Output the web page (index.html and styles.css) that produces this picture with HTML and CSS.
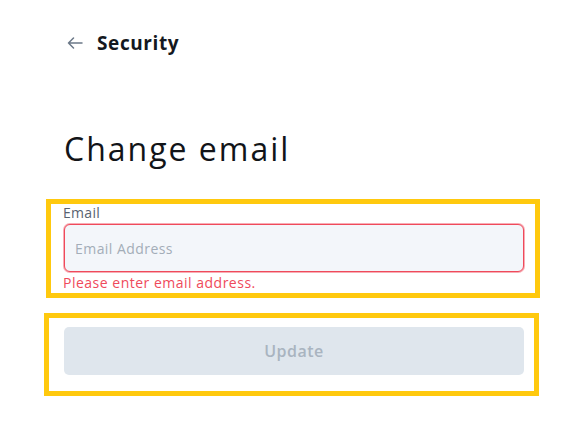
FILE: index.html
```html
<!DOCTYPE html>
<html>
<head>
<meta charset="utf-8">
<link rel="stylesheet" href="styles.css">
</head>
<body>
<div class="page">
  <div class="topbar">
    <svg class="back" width="16" height="12" viewBox="0 0 16 12" fill="none"><path d="M15 6H1.5M6.5 1L1.5 6l5 5" stroke="#6b7888" stroke-width="1.5" stroke-linecap="round" stroke-linejoin="round"/></svg>
    <span class="topbar-title">Security</span>
  </div>
  <h1 class="title">Change email</h1>
  <div class="hl hl-field">
    <label class="label">Email</label>
    <input class="input" type="text" placeholder="Email Address">
    <div class="error">Please enter email address.</div>
  </div>
  <div class="hl hl-btn">
    <button class="btn" disabled>Update</button>
  </div>
</div>
</body>
</html>
```
FILE: styles.css
```css
* { box-sizing: border-box; }
html, body { margin: 0; background: #fff; }
body { font-family: "Open Sans", "DejaVu Sans", sans-serif; color: #111318; }
.page { padding: 30px 0 0 46px; width: 586px; }
.topbar { display: flex; align-items: center; gap: 14px; height: 26px; padding-left: 21px; }
.back { display: block; }
.topbar-title { font-size: 19px; font-weight: 700; color: #141820; letter-spacing: 0.6px; }
.title { margin: 73px 0 0 18px; font-size: 32px; font-weight: 400; line-height: 40px; color: #121418; letter-spacing: 2px; }
.hl { border: 5px solid #ffc90e; }
.hl-field { width: 494px; margin-top: 30px; padding: 0 11px 0 12px; display: flex; flex-direction: column; }
.label { font-size: 14px; line-height: 18px; color: #586270; letter-spacing: 0.3px; }
.input { margin-top: 2px; height: 48px; width: 460px; margin-left: 1px; border: 1px solid #ef4a5b; box-shadow: 0 0 0 1px rgba(239, 74, 91, 0.45); border-radius: 6px; background: #f3f6fa; padding: 0 10px; font-family: inherit; font-size: 14px; color: #111; outline: none; letter-spacing: 0.45px; }
.input::placeholder { color: #a3adb8; }
.error { margin-top: 1px; font-size: 14px; line-height: 20px; color: #ef4a5b; letter-spacing: 0.5px; }
.hl-btn { width: 495px; margin-top: 15px; margin-left: -2px; padding: 9px 10px 16px 15px; }
.btn { display: block; width: 460px; height: 48px; border: none; border-radius: 5px; background: #dfe6ed; color: #a9b4c0; font-family: inherit; font-size: 16px; font-weight: 600; letter-spacing: 0.5px; }
```
